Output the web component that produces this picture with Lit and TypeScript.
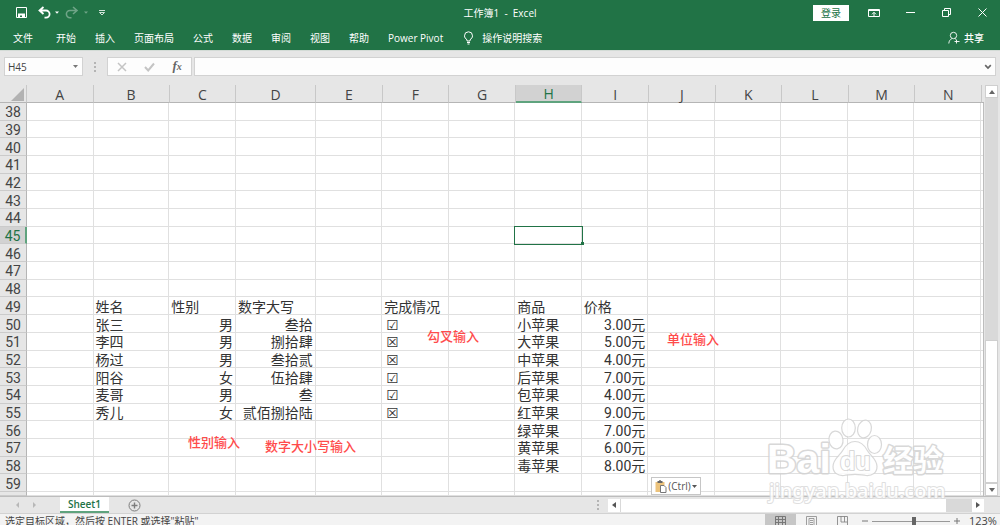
import { LitElement, html, css, svg, nothing } from "lit";
import { customElement, state } from "lit/decorators.js";
import { classMap } from "lit/directives/class-map.js";

const COLS = "ABCDEFGHIJKLMN".split("");
const RIGHT = new Set(["C", "D", "I"]);

const data: Record<string, string> = {};

function fill(col: string, start: number, values: string[]) {
  values.forEach((v, i) => (data[col + (start + i)] = v));
}

fill("B", 49, ["姓名", "张三", "李四", "杨过", "阳谷", "麦哥", "秀儿"]);
fill("C", 49, ["性别", "男", "男", "男", "女", "男", "女"]);
fill("D", 49, ["数字大写", "叁拾", "捌拾肆", "叁拾贰", "伍拾肆", "叁", "贰佰捌拾陆"]);
fill("F", 49, ["完成情况", "☑", "☒", "☒", "☑", "☑", "☒"]);
fill("H", 49, ["商品", "小苹果", "大苹果", "中苹果", "后苹果", "包苹果", "红苹果", "绿苹果", "黄苹果", "毒苹果"]);
fill("I", 49, ["价格", "3.00元", "5.00元", "4.00元", "7.00元", "4.00元", "9.00元", "7.00元", "6.00元", "8.00元"]);

const ROWS = Array.from({ length: 22 }, (_, i) => 38 + i);

@customElement("title-bar")
class TitleBar extends LitElement {
  static styles = css`
    :host { display: block; background: #217346; color: #fff; }
    button { all: unset; display: grid; place-items: center; box-sizing: border-box; }
    svg { display: block; fill: none; stroke: #fff; }
    .top { display: grid; grid-template-columns: 1fr auto 1fr; align-items: center; height: 25px; }
    .quick { display: flex; align-items: center; padding-left: 15px; }
    .dim { opacity: 0.35; }
    .name { font-size: 10px; line-height: 16px; white-space: pre; }
    .win { display: flex; align-items: center; justify-content: flex-end; padding-right: 9px; }
    .win .login { background: #fff; color: #217346; font-size: 10px; line-height: 16px; width: 36px; height: 16px; text-align: center; margin-right: 16px; }
    .ctl { width: 18px; height: 18px; }
    .win .ctl + .ctl { margin-left: 18px; }
    .tabs { display: flex; align-items: center; height: 25px; padding: 0 16px 0 13px; font-size: 10px; line-height: 16px; white-space: nowrap; }
    .tabs button { margin-right: 19px; }
    .tabs .file { margin-right: 23px; }
    .tabs .tell { display: flex; gap: 8px; align-items: center; margin-left: 1px; }
    .tabs .share { display: flex; gap: 4px; align-items: center; margin: 0 0 0 auto; font-weight: 500; }
  `;

  render() {
    return html`
      <div class="top">
        <div class="quick">
          <button aria-label="保存"><svg width="13" height="13" viewBox="0 0 13 13"><path d="M1.500 1.500h10v10h-10z"/><path d="M3 11.500v-4h7v4h-3v-2h-2v2z" fill="#fff" stroke="none"/></svg></button>
          <button aria-label="撤消"><svg width="32" height="14" viewBox="0 0 32 14"><path d="M12 4.500h6a3.600 3.600 0 0 1 0 7.200h-1.500M15.500 1l-4 3.500 4 3.500" stroke-width="1.800"/><path d="M27 5.500h4l-2 2.200z" fill="#fff" stroke="none"/></svg></button>
          <button class="dim" aria-label="恢复"><svg width="30" height="14" viewBox="2 0 30 14"><path d="M18 4.500h-6a3.600 3.600 0 0 0 0 7.200h1.500M15 1l4 3.500-4 3.500" stroke-width="1.600"/><path d="M26 5.500h4l-2 2.200z" fill="#fff" stroke="none"/></svg></button>
          <button aria-label="自定义快速访问工具栏"><svg width="24" height="14" viewBox="0 0 24 14"><path d="M9 4.500h6" stroke-width=".8"/><path d="M9.500 6.500h5l-2.500 2.500z" stroke-width=".8"/></svg></button>
        </div>
        <div class="name">工作簿1  -  Excel</div>
        <div class="win">
          <button class="login">登录</button>
          <button class="ctl" aria-label="功能区显示选项"><svg width="12" height="10" viewBox="0 0 12 10"><path d="M.5 1.500h11v7h-11zM.5 2.500h11M6 8V4.300M4 6.300l2-2 2 2"/></svg></button>
          <button class="ctl" aria-label="最小化"><svg width="9" height="9"><path d="M0 4.500h9"/></svg></button>
          <button class="ctl" aria-label="还原"><svg width="9" height="9" viewBox="0 0 9 9"><path d="M.5 2.500h6v6h-6zM2.500 2.500v-2h6v6h-2"/></svg></button>
          <button class="ctl" aria-label="关闭"><svg width="9" height="9" viewBox="0 0 9 9"><path d="M.5.5l8 8M8.500.5l-8 8"/></svg></button>
        </div>
      </div>
      <nav class="tabs">
        <button class="file">文件</button>
        ${["开始", "插入", "页面布局", "公式", "数据", "审阅", "视图", "帮助", "Power Pivot"].map((t) => html`<button>${t}</button>`)}
        <button class="tell"><svg width="11" height="14" viewBox="0 0 11 14"><path d="M4 10V8.800C2.500 7.600 1.500 6.500 1.500 4.800a4 4 0 0 1 8 0C9.500 6.500 8.500 7.600 7 8.800V10zM4 11.500h3M4.500 13h2"/></svg>操作说明搜索</button>
        <button class="share"><svg width="12" height="13" viewBox="0 0 12 13" stroke-width=".9"><circle cx="5.500" cy="4.500" r="3.200"/><path d="M.8 12.500c.2-2.500 1.300-4 3-4.800M6.800 7.500l1.200.8M8.500 8.500v4M6.500 10.500h5"/></svg>共享</button>
      </nav>
    `;
  }
}

@customElement("formula-bar")
class FormulaBar extends LitElement {
  static styles = css`
    :host { display: flex; align-items: center; height: 19px; padding: 6px 4px 9px; border-top: 1px solid #d3dbd6; }
    .box { display: flex; align-items: center; box-sizing: border-box; height: 19px; background: #fdfdfd; border: 1px solid #d2d2d2; }
    input { all: unset; flex: 1; min-width: 0; font-size: 10px; line-height: 16px; color: #444; padding-left: 3px; }
    .namebox { width: 79px; }
    .dots { width: 24px; display: grid; place-items: center; }
    .tools { width: 85px; justify-content: space-around; margin-right: 2px; }
    .formula { flex: 1; }
    button { all: unset; display: grid; place-items: center; width: 14px; height: 16px; }
    svg { display: block; fill: none; }
    .fx { font: italic 700 13px/14px "Liberation Serif", serif; color: #666; }
    .fx small { font-size: 10px; }
  `;

  render() {
    return html`
      <div class="box namebox"><input aria-label="名称框" .value=${"H45"} /><button aria-label="展开名称框"><svg width="5" height="3"><path d="M0 0h5L2.500 3z" fill="#777"/></svg></button></div>
      <div class="dots"><svg width="2" height="10"><path d="M0 0h2v2H0zM0 4h2v2H0zM0 8h2v2H0z" fill="#b4b4b4"/></svg></div>
      <div class="box tools">
        <button aria-label="取消"><svg width="10" height="10"><path d="M1 1l8 8M9 1L1 9" stroke="#c4c4c4" stroke-width="1.500"/></svg></button>
        <button aria-label="输入"><svg width="11" height="10"><path d="M1 5l3.200 3.500L10 1.500" stroke="#c4c4c4" stroke-width="2"/></svg></button>
        <button class="fx" aria-label="插入函数"><span>f<small>x</small></span></button>
      </div>
      <div class="box formula"><input aria-label="编辑栏" /><button aria-label="展开编辑栏"><svg width="8" height="6"><path d="M1.200 1.200L4 4l2.800-2.800" stroke="#666" stroke-width="1.700"/></svg></button></div>
    `;
  }
}

@customElement("sheet-grid")
class SheetGrid extends LitElement {
  @state() active = "H45";

  static styles = css`
    :host { display: block; min-height: 0; min-width: 0; color: #333; }
    table { display: flex; flex-direction: column; height: 100%; }
    thead { flex: none; }
    tbody { flex: 1; min-height: 0; display: grid; grid-template-rows: repeat(22, 1fr) 4px; background: #fff; border-right: 1px solid #bdbdbd; }
    tr { display: grid; min-height: 0; grid-template-columns: 27px 50fr 57fr 50fr 60fr repeat(10, 50fr) 2px; }
    th, td { display: flex; align-items: center; box-sizing: border-box; padding: 2px 0 0; min-width: 0; min-height: 0; font-weight: 400; white-space: nowrap; border-right: 1px solid #e0e0e0; border-bottom: 1px solid #e0e0e0; line-height: 16px; }
    thead tr { height: 18px; }
    th { justify-content: center; font-size: 14px; color: #444; }
    thead th { border-right-color: #c8c8c8; border-bottom-color: #b5b5b5; }
    tbody th { font-family: Roboto, sans-serif; background: #e6e6e6; border-right-color: #b5b5b5; border-bottom-color: #cbcbcb; }
    td { font-family: Roboto, "Noto Sans CJK SC", sans-serif; font-size: 14px; padding: 2px 2px 0; }
    .edge { border-right: none; padding: 0; }
    .num { justify-content: flex-end; }
    thead .on { background: #d2d2d2; color: #217346; border-bottom: 2px solid #5fa37e; }
    tbody .on { background: #d2d2d2; color: #217346; border-right: 2px solid #5fa37e; }
    .mark { font-family: "DejaVu Sans", sans-serif; padding-left: 4px; }
    .cursor { position: relative; outline: 1px solid #217346; }
    .cursor::after { content: ""; position: absolute; right: -3px; bottom: -2px; width: 3px; height: 3px; background: #217346; }
    .corner { justify-content: flex-end; padding-right: 2px; }
    svg { display: block; }
  `;

  cell(col: string, row: number) {
    const id = col + row;
    const text = data[id];
    const cls = {
      num: RIGHT.has(col) && row > 49,
      mark: col === "F" && row > 49 && !!text,
      cursor: id === this.active,
    };
    return html`<td class=${classMap(cls)} @click=${() => (this.active = id)}>${text ?? nothing}</td>`;
  }

  render() {
    const col = this.active[0];
    const row = Number(this.active.slice(1));
    return html`
      <table>
        <thead><tr>
          <th class="corner"><svg width="13" height="13"><path d="M13 0v13H0z" fill="#b2b2b2"/></svg></th>
          ${COLS.map((c) => html`<th class=${classMap({ on: c === col })}>${c}</th>`)}
          <th class="edge"></th>
        </tr></thead>
        <tbody>
          ${ROWS.map((r) => html`<tr><th class=${classMap({ on: r === row })}>${r}</th>${COLS.map((c) => this.cell(c, r))}<td class="edge"></td></tr>`)}
          <tr><th></th>${COLS.map(() => html`<td></td>`)}<td class="edge"></td></tr>
        </tbody>
      </table>
    `;
  }
}

@customElement("bottom-bar")
class BottomBar extends LitElement {
  static styles = css`
    :host { display: block; }
    button { all: unset; display: grid; place-items: center; box-sizing: border-box; }
    svg { display: block; fill: none; }
    .sheets { display: flex; align-items: center; height: 16px; border-top: 1px solid #bdbdbd; padding-right: 16px; background: #e6e6e6; }
    .nav { width: 17px; }
    .nav:first-child { margin-left: 9px; }
    .tab { margin-left: 17px; width: 49px; height: 16px; background: #fff; color: #217346; font-size: 10px; line-height: 14px; border-bottom: 2px solid #5fa37e; font-weight: 600; }
    .add { margin-left: 19px; }
    .dots { margin-left: auto; margin-right: 9px; }
    .hbar { display: flex; flex: 0 1 376px; height: 13px; background: #d9d9d9; }
    .hbar button { width: 12px; background: #fff; }
    .hthumb { flex: 1; background: #fff; margin: 0 26px 0 1px; }
    .status { display: flex; height: 11px; overflow: hidden; background: #f3f3f3; border-top: 1px solid #d2d2d2; font-size: 10px; line-height: 14px; color: #444; }
    .msg { flex: 1; padding-left: 5px; }
    .view { width: 31px; height: 14px; }
    .sel { background: #c6c6c6; }
    .step { width: 14px; height: 14px; }
    .zoom { appearance: none; width: 78px; height: 14px; margin: 0; background: linear-gradient(#999, #999) center / 100% 1px no-repeat; }
    .zoom::-webkit-slider-thumb { appearance: none; width: 4px; height: 8px; background: #666; }
    .pct { width: 31px; margin-left: 5px; font-size: 11px; }
  `;

  render() {
    return html`
      <div class="sheets">
        <button class="nav" aria-label="上一个工作表"><svg width="3" height="6"><path d="M3 0v6L0 3z" fill="#b8b8b8"/></svg></button>
        <button class="nav" aria-label="下一个工作表"><svg width="3" height="6"><path d="M0 0v6l3-3z" fill="#b8b8b8"/></svg></button>
        <button class="tab">Sheet1</button>
        <button class="add" aria-label="新工作表"><svg width="13" height="13" stroke="#7d7d7d"><circle cx="6.500" cy="6.500" r="5.500"/><path d="M3.500 6.500h6M6.500 3.500v6" stroke-width="1.400"/></svg></button>
        <svg class="dots" width="2" height="10"><path d="M0 0h2v2H0zM0 4h2v2H0zM0 8h2v2H0z" fill="#b4b4b4"/></svg>
        <div class="hbar">
          <button aria-label="向左滚动"><svg width="4" height="6"><path d="M4 0v6L0 3z" fill="#555"/></svg></button>
          <div class="hthumb"></div>
          <button aria-label="向右滚动"><svg width="4" height="6"><path d="M0 0v6l4-3z" fill="#555"/></svg></button>
        </div>
      </div>
      <div class="status">
        <span class="msg">选定目标区域，然后按 ENTER 或选择"粘贴"</span>
        <button class="view sel" aria-label="普通"><svg width="11" height="10" stroke="#777"><path d="M.5.5h10v9H.5zM.5 3.500h10M.5 6.500h10M3.500.5v9M7.500.5v9"/></svg></button>
        <button class="view" aria-label="页面布局"><svg width="11" height="10" stroke="#888"><path d="M.5.5h10v9H.5zM3 10V2.500h5V10M4 4.500h3M4 6.500h3M4 8.500h3" stroke-width=".8"/></svg></button>
        <button class="view" aria-label="分页预览"><svg width="11" height="10" stroke="#888"><path d="M.5.5h10v9H.5zM4 0v6M7.500 0v6M4 6h6.500" stroke-width=".9"/></svg></button>
        <button class="step" aria-label="缩小"><svg width="6" height="6"><path d="M0 3h6" stroke="#777"/></svg></button>
        <input class="zoom" type="range" min="0" max="100" .value=${"54"} aria-label="显示比例" />
        <button class="step" aria-label="放大"><svg width="6" height="6"><path d="M0 3h6M3 0v6" stroke="#777"/></svg></button>
        <span class="pct">123%</span>
      </div>
    `;
  }
}

@customElement("app-root")
class AppRoot extends LitElement {
  static styles = css`
    :host { display: flex; flex-direction: column; height: 100vh; overflow: hidden; position: relative; background: #e6e6e6; font-family: "Open Sans", "Noto Sans CJK SC", sans-serif; }
    title-bar, formula-bar, bottom-bar { flex: none; }
    .main { flex: 1; min-height: 0; display: flex; }
    sheet-grid { flex: 1; }
    .vbar { display: flex; flex-direction: column; width: 13px; margin: 0 2px 0 1px; background: #d9d9d9; }
    .vbar button { all: unset; display: grid; place-items: center; box-sizing: border-box; height: 13px; background: #fff; border: 1px solid #cfcfcf; }
    .vbar .track { flex: 243; }
    .vbar .thumb { flex: 142; box-sizing: border-box; background: #fff; border: 1px solid #cfcfcf; }
    .note { position: absolute; font-size: 13px; line-height: 18px; font-weight: 500; color: #ff4b4b; white-space: nowrap; }
    .gender { left: 188px; top: 433px; }
    .caps { left: 265px; top: 437px; }
    .ticks { left: 427px; top: 327px; }
    .unit { left: 667px; top: 330px; }
    .paste { all: unset; position: absolute; left: 651px; top: 477px; box-sizing: border-box; width: 50px; height: 18px; display: flex; align-items: center; justify-content: center; gap: 1px; background: #fff; border: 1px solid #c6c6c6; font-size: 10px; line-height: 14px; color: #555; }
    .logo { position: absolute; right: 48px; bottom: 18px; width: 186px; height: 92px; pointer-events: none; }
    .big { font-family: "Liberation Sans", sans-serif; font-weight: 700; }
    .halo { paint-order: stroke; }
  `;

  logo() {
    return svg`
      <g fill="#fff" stroke="#d2d2d2" stroke-width="1.200" stroke-linejoin="round" opacity=".85">
        <text class="big halo" x="1" y="58" font-size="41" stroke-width="3">Bai</text>
        <ellipse cx="70" cy="25" rx="7" ry="9" transform="rotate(-8 70 25)"/>
        <ellipse cx="82.500" cy="13" rx="6.800" ry="9"/>
        <ellipse cx="98.500" cy="14" rx="6.800" ry="9" transform="rotate(14 98.500 14)"/>
        <ellipse cx="108.500" cy="29.500" rx="7" ry="9"/>
        <path d="M89 26.500c6 0 9.500 4 12 8.500 3 5.500 10 9 10 16.500 0 6.500-5 9.500-11 9-4-.4-7-1.200-11-1.200s-7 .8-11 1.200c-6 .5-11-2.500-11-9 0-7.500 7-11 10-16.500 2.500-4.500 6-8.500 12-8.500z"/>
        <text class="big halo" x="74" y="55" font-size="25" stroke-width="2">du</text>
        <text class="halo" x="117" y="56" font-size="30" font-weight="700" stroke-width="3">经验</text>
        <text class="halo" x="3" y="83" font-size="20" font-weight="500" stroke="#dadada" stroke-width="2" font-family="Noto Sans">jingyan.baidu.com</text>
      </g>`;
  }

  render() {
    return html`
      <title-bar></title-bar>
      <formula-bar></formula-bar>
      <div class="main">
        <sheet-grid></sheet-grid>
        <div class="vbar">
          <button aria-label="向上滚动"><svg width="6" height="4"><path d="M0 4h6L3 0z" fill="#666"/></svg></button>
          <div class="track"></div>
          <div class="thumb"></div>
          <button aria-label="向下滚动"><svg width="6" height="4"><path d="M0 0h6L3 4z" fill="#666"/></svg></button>
        </div>
      </div>
      <bottom-bar></bottom-bar>
      <span class="note gender">性别输入</span>
      <span class="note caps">数字大小写输入</span>
      <span class="note ticks">勾叉输入</span>
      <span class="note unit">单位输入</span>
      <button class="paste"><svg width="12" height="13" viewBox="0 0 12 13"><path d="M.5 2h9v10h-9z" fill="#ecc37c"/><path d="M2.500 1h1.500a1 1 0 0 1 2 0h1.500v2h-5z" fill="#666"/><path d="M5.500 5.500h3.500l2 2v5h-5.500z" fill="#fff" stroke="#777"/></svg>(Ctrl)<svg width="5" height="3"><path d="M0 0h5L2.500 3z" fill="#555"/></svg></button>
      <svg class="logo" viewBox="0 0 186 92">${this.logo()}</svg>
    `;
  }
}
